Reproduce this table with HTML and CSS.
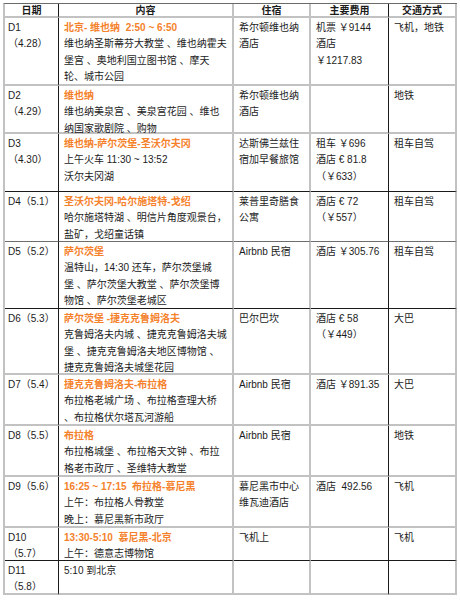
FILE: index.html
```html
<!DOCTYPE html>
<html lang="zh-CN">
<head>
<meta charset="utf-8">
<title>行程</title>
<link rel="stylesheet" href="styles.css">
</head>
<body>
<div class="sheet">
  <div class="row head">
    <div class="c d">日期</div>
    <div class="c t">内容</div>
    <div class="c h">住宿</div>
    <div class="c f">主要费用</div>
    <div class="c m">交通方式</div>
  </div>
  <div class="row">
    <div class="c d">D1<br>（4.28）</div>
    <div class="c t"><span class="hl">北京- 维也纳&nbsp; 2:50 ~ 6:50</span><br>维也纳圣斯蒂芬大教堂 、维也纳霍夫<br>堡宫 、奥地利国立图书馆 、摩天<br>轮、城市公园</div>
    <div class="c h">希尔顿维也纳<br>酒店</div>
    <div class="c f">机票 ￥9144<br>酒店<br>￥1217.83</div>
    <div class="c m">飞机，地铁</div>
  </div>
  <div class="row">
    <div class="c d">D2<br>（4.29）</div>
    <div class="c t"><span class="hl">维也纳</span><br>维也纳美泉宫 、美泉宫花园 、维也<br>纳国家歌剧院 、购物</div>
    <div class="c h">希尔顿维也纳<br>酒店</div>
    <div class="c f"></div>
    <div class="c m">地铁</div>
  </div>
  <div class="row dk">
    <div class="c d">D3<br>（4.30）</div>
    <div class="c t"><span class="hl">维也纳-萨尔茨堡-圣沃尔夫冈</span><br>上午火车 11:30 ~ 13:52<br>沃尔夫冈湖</div>
    <div class="c h">达斯佛兰兹住<br>宿加早餐旅馆</div>
    <div class="c f">租车 ￥696<br>酒店 € 81.8<br>（￥633）</div>
    <div class="c m">租车自驾</div>
  </div>
  <div class="row mid">
    <div class="c d">D4（5.1）</div>
    <div class="c t"><span class="hl">圣沃尔夫冈-哈尔施塔特-戈绍</span><br>哈尔施塔特湖 、明信片角度观景台，<br>盐矿，戈绍童话镇</div>
    <div class="c h">莱普里奇膳食<br>公寓</div>
    <div class="c f">酒店 € 72<br>（￥557）</div>
    <div class="c m">租车自驾</div>
  </div>
  <div class="row dk">
    <div class="c d">D5（5.2）</div>
    <div class="c t"><span class="hl">萨尔茨堡</span><br>温特山，14:30 还车，萨尔茨堡城<br>堡 、萨尔茨堡大教堂 、萨尔茨堡博<br>物馆 、萨尔茨堡老城区</div>
    <div class="c h">Airbnb 民宿</div>
    <div class="c f">酒店 ￥305.76</div>
    <div class="c m">租车自驾</div>
  </div>
  <div class="row">
    <div class="c d">D6（5.3）</div>
    <div class="c t"><span class="hl">萨尔茨堡 -捷克克鲁姆洛夫</span><br>克鲁姆洛夫内城 、捷克克鲁姆洛夫城<br>堡 、捷克克鲁姆洛夫地区博物馆 、<br>捷克克鲁姆洛夫城堡花园</div>
    <div class="c h">巴尔巴坎</div>
    <div class="c f">酒店 € 58<br>（￥449）</div>
    <div class="c m">大巴</div>
  </div>
  <div class="row">
    <div class="c d">D7（5.4）</div>
    <div class="c t"><span class="hl">捷克克鲁姆洛夫-布拉格</span><br>布拉格老城广场 、布拉格查理大桥<br>、布拉格伏尔塔瓦河游船</div>
    <div class="c h">Airbnb 民宿</div>
    <div class="c f">酒店 ￥891.35</div>
    <div class="c m">大巴</div>
  </div>
  <div class="row">
    <div class="c d">D8（5.5）</div>
    <div class="c t"><span class="hl">布拉格</span><br>布拉格城堡 、布拉格天文钟 、布拉<br>格老市政厅 、圣维特大教堂</div>
    <div class="c h">Airbnb 民宿</div>
    <div class="c f"></div>
    <div class="c m">地铁</div>
  </div>
  <div class="row">
    <div class="c d">D9（5.6）</div>
    <div class="c t"><span class="hl">16:25 ~ 17:15&nbsp; 布拉格-慕尼黑</span><br>上午：布拉格人骨教堂<br>晚上：慕尼黑新市政厅</div>
    <div class="c h">慕尼黑市中心<br>维瓦迪酒店</div>
    <div class="c f">酒店&nbsp; 492.56</div>
    <div class="c m">飞机</div>
  </div>
  <div class="row dk">
    <div class="c d">D10<br>（5.7）</div>
    <div class="c t"><span class="hl">13:30-5:10&nbsp; 慕尼黑-北京</span><br>上午：德意志博物馆</div>
    <div class="c h">飞机上</div>
    <div class="c f"></div>
    <div class="c m">飞机</div>
  </div>
  <div class="row">
    <div class="c d">D11<br>（5.8）</div>
    <div class="c t">5:10 到北京</div>
    <div class="c h"></div>
    <div class="c f"></div>
    <div class="c m"></div>
  </div>
</div>
</body>
</html>
```

FILE: styles.css
```css
html, body {
  margin: 0;
  padding: 0;
  background: #ffffff;
}

body {
  font-family: "Liberation Sans", "Noto Sans CJK SC", sans-serif;
  font-size: 10px;
  color: #1c1c1c;
}

.sheet {
  display: grid;
  grid-template-columns: 54px 175px 77px 78px 68px;
  grid-template-rows: 14px 68px 48px 58px 50px 67px 66px 51px 51px 51px 33px 34px;
  width: 454px;
  margin: 3px 0 0 3px;
  border-left: 2px solid #c2c2c2;
  border-top: 1px solid #6a6a6a;
  box-sizing: border-box;
}

.row {
  display: contents;
}

.c {
  box-sizing: border-box;
  padding: 1.5px 2px 0 5px;
  line-height: 16.6px;
  white-space: nowrap;
  overflow: visible;
  border-bottom: 2px solid #c2c2c2;
}

.d {
  padding-left: 3px;
  border-right: 1px solid #1a1a1a;
}

.t,
.h {
  border-right: 2px solid #c2c2c2;
}

.f {
  border-right: 1px solid #1a1a1a;
}

.m {
  border-right: 2px solid #c2c2c2;
}

.row.dk > .c {
  border-bottom: 1px solid #1a1a1a;
}

.row.mid > .c {
  border-bottom: 1px solid #6e6e6e;
}

.row.head > .c {
  padding: 0;
  line-height: 13px;
  text-align: center;
  font-weight: bold;
}

.hl {
  color: #f5812b;
  font-weight: bold;
}
```
